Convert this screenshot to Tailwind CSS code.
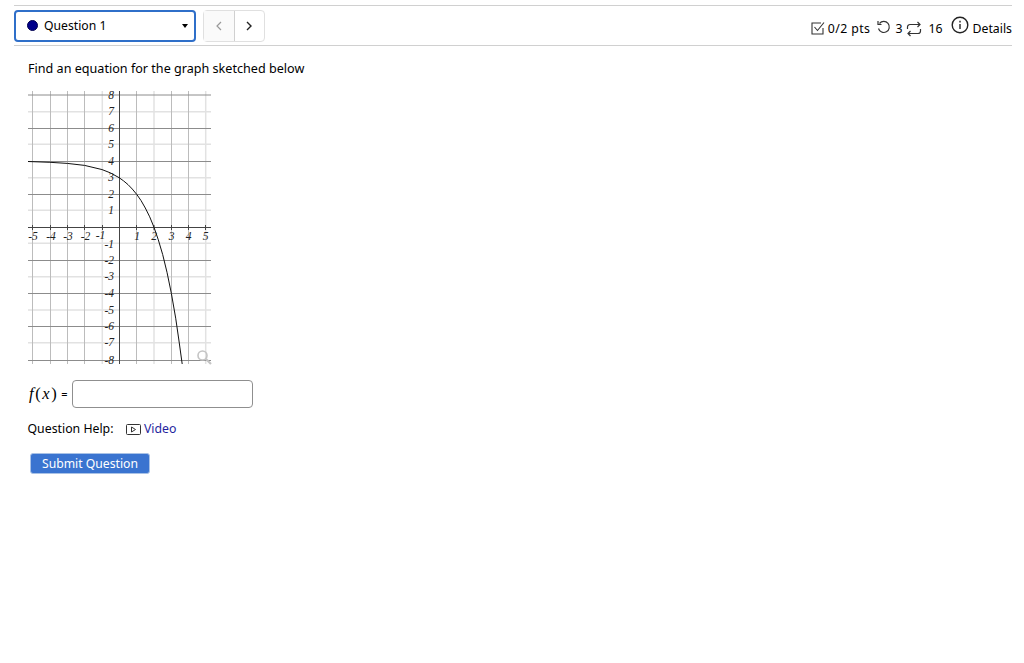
<!DOCTYPE html>
<html lang="en">
<head>
    <meta charset="UTF-8">
    <title>Question 1</title>
    <script src="https://cdn.jsdelivr.net/npm/@tailwindcss/browser@4"></script>
</head>
<body class="bg-white text-black font-['Noto_Sans',sans-serif] text-[12.6px]">
    <div class="pt-[5px] pl-[14px] pr-[12px]">
        <!-- question bar -->
        <div class="flex items-center justify-between h-[41px] border-y border-[#d0d0d0]">
            <div class="flex items-center gap-[7px]">
                <div class="flex items-center w-[182px] h-[32px] border-2 border-[#2f6fc9] rounded-[4px] pl-[11px] pr-[6px]">
                    <span class="w-[11px] h-[11px] rounded-full bg-[#00008b] border border-[#000050] mr-[6px]"></span>
                    <span class="flex-1 pt-[1px] text-[12.2px]">Question 1</span>
                    <span class="w-0 h-0 border-x-[3.5px] border-x-transparent border-t-[4px] border-t-black"></span>
                </div>
                <div class="flex h-[32px] w-[62px] border border-[#e0e0e0] rounded-[4px]">
                    <div class="flex-1 flex items-center justify-center bg-[#fafafa] border-r border-[#d0d0d0]">
                        <svg class="w-[8px] h-[10px]" viewBox="0 0 8 10" fill="none" stroke="#999" stroke-width="1.2"><path d="M6 1 2 5l4 4"/></svg>
                    </div>
                    <div class="flex-1 flex items-center justify-center">
                        <svg class="w-[8px] h-[10px]" viewBox="0 0 8 10" fill="none" stroke="#222" stroke-width="1.4"><path d="M2 1l4 4-4 4"/></svg>
                    </div>
                </div>
            </div>
            <div class="flex items-center pt-[8px] text-[12.3px]">
                <svg class="w-[14px] h-[14px] mr-[3px] -mt-[3px]" viewBox="0 0 14 14" fill="none" stroke="#333" stroke-width="1.100"><path d="M12 7v6H1V2h9"/><path d="M3.500 6 6.500 9.500 13 1.500"/></svg>
                <span class="tracking-[0.4px]">0/2 pts</span>
                <svg class="w-[15px] h-[15px] ml-[6px] mr-[4px] -mt-[5px]" viewBox="0 0 15 15" fill="none" stroke="#333" stroke-width="1.200"><path d="M3.500 3.500a5.500 5.500 0 1 1-1 5"/><path d="M2 1v3.500h3.500"/></svg>
                <span>3</span>
                <svg class="w-[16px] h-[16px] ml-[4px] mr-[6px] -mt-[2px]" viewBox="0 0 16 16" fill="none" stroke="#333" stroke-width="1.200"><path d="M1.500 8V6A2.500 2.500 0 0 1 4 3.500h10M11.500 1 14 3.500 11.500 6"/><path d="M14.500 8v2a2.500 2.500 0 0 1-2.500 2.500H2M4.500 10 2 12.500 4.500 15"/></svg>
                <span>16</span>
                <svg class="w-[18px] h-[18px] ml-[8px] mr-[4px] -mt-[10px]" viewBox="0 0 18 18" fill="none" stroke="#222" stroke-width="1.400"><circle cx="9" cy="9" r="7.800"/><path d="M9 8v5M9 4.800v1.700"/></svg>
                <span>Details</span>
            </div>
        </div>
    </div>

    <div class="pl-[28px]">
        <p class="mt-[14px] leading-[18px]">Find an equation for the graph sketched below</p>

        <svg class="mt-[8px] block" width="184" height="280" viewBox="28 86 184 280" font-family="Liberation Serif" font-style="italic" font-size="11.5" fill="#222">
            <g stroke="#e2e2e2" stroke-width="1.500">
                <path d="M102.300 91V364M154 91V364M205.700 91V364"/>
                <path d="M28 111.700H211M28 144.300H211M28 177.700H211M28 210.300H211M28 243.300H211M28 276.700H211M28 310H211M28 342.700H211"/>
            </g>
            <g stroke="#bcbcbc" stroke-width="1">
                <path d="M32.500 91V364M50.500 91V364M67.500 91V364M84.500 91V364M136.500 91V364M171.500 91V364M188.500 91V364"/>
            </g>
            <g stroke="#8c8c8c" stroke-width="1">
                <path d="M28 95H211M28 128.500H211M28 161.500H211M28 194.500H211M28 260.500H211M28 293.500H211M28 326.500H211M28 360.500H211"/>
            </g>
            <path d="M119.500 91V364M28 227.500H211" stroke="#444" stroke-width="1"/>
            <path d="M32.500 225v5M50.500 225v5M67.500 225v5M84.500 225v5M102.500 225v5M136.500 225v5M154 225v5M171.500 225v5M188.500 225v5M205.500 225v5" stroke="#444"/>
            <polyline fill="none" stroke="#111" stroke-width="1" points="28,161.500 49.900,162.300 67.250,163.400 84.600,165.400 101.950,169.550 110.600,172.960 119.300,177.800 123.600,180.900 128,184.600 132.300,189.050 136.650,194.300 141,200.500 145.300,208 149.700,216.800 154,227.300 158.300,239.800 162.700,254.600 167,272.300 171.350,293.300 175.700,318.200 179,341 182.200,364"/>
            <g text-anchor="end">
                <text x="114" y="98.500">8</text><text x="114" y="115">7</text><text x="114" y="132">6</text><text x="114" y="148">5</text><text x="114" y="165">4</text><text x="114" y="181">3</text><text x="114" y="197.500">2</text><text x="114" y="214">1</text>
                <text x="114" y="247.500">-1</text><text x="114" y="263.500">-2</text><text x="114" y="280">-3</text><text x="114" y="297">-4</text><text x="114" y="313.500">-5</text><text x="114" y="330">-6</text><text x="114" y="346">-7</text><text x="114" y="363.500">-8</text>
            </g>
            <g text-anchor="middle">
                <text x="33" y="240">-5</text><text x="51" y="240">-4</text><text x="68" y="240">-3</text><text x="85.500" y="240">-2</text><text x="100.500" y="239">-1</text>
                <text x="137" y="240">1</text><text x="154" y="240">2</text><text x="171.500" y="240">3</text><text x="188.500" y="240">4</text><text x="205.500" y="240">5</text>
            </g>
            <g fill="none" stroke="#c4c4c4">
                <circle cx="202.500" cy="355.500" r="4.500" stroke-width="1.600"/>
                <path d="M206 359 211 364" stroke-width="2.200"/>
            </g>
        </svg>

        <div class="flex items-center mt-[14px]">
            <span class="font-['Liberation_Serif',serif] text-[16.500px] tracking-[1.600px] ml-[1px] mr-[3px]"><i>f</i>(<i>x</i>)</span>
            <span class="text-[11px] mr-[4px]">=</span>
            <input type="text" class="w-[181px] h-[28px] border border-[#8f8f8f] rounded-[4px] bg-white">
        </div>

        <div class="flex items-center mt-[12px] -ml-[0.5px] leading-[18px] text-[12.3px]">
            <span>Question Help:</span>
            <svg class="w-[15px] h-[11px] ml-[12.500px] mr-[3px]" viewBox="0 0 15 11" fill="none" stroke="#333"><rect x="0.500" y="0.500" width="14" height="10" rx="1"/><path d="M5.500 3v5l4-2.500z"/></svg>
            <a class="text-[#1f1f9e]">Video</a>
        </div>

        <button class="block mt-[15px] ml-[2px] w-[120px] h-[21px] bg-[#3a74d0] border border-[#a9c2e6] rounded-[3px] text-white text-center leading-[18px] text-[12.2px]">Submit Question</button>
    </div>
</body>
</html>
